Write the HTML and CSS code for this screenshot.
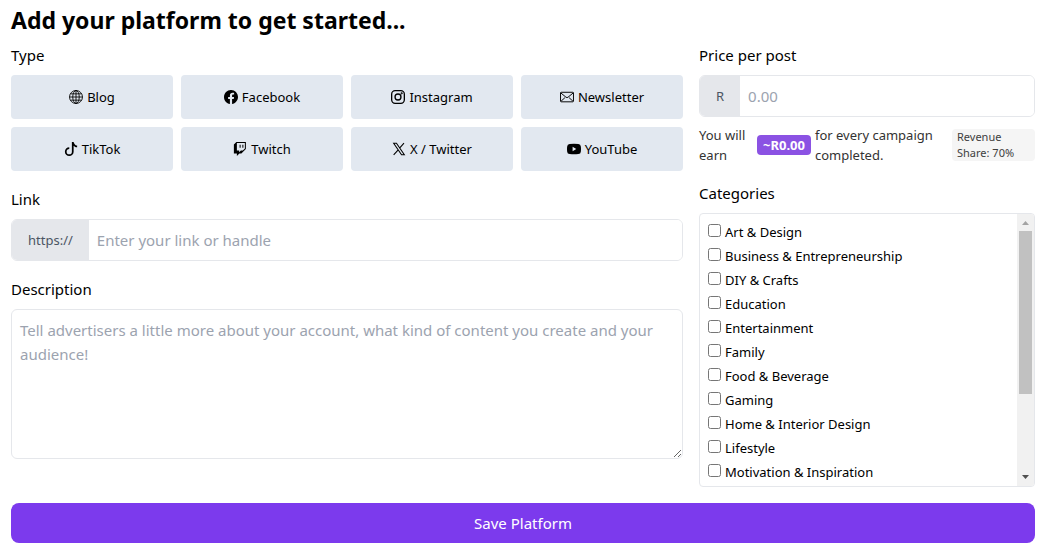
FILE: index.html
```html
<!DOCTYPE html>
<html lang="en">
<head>
	<meta charset="UTF-8">
	<meta name="viewport" content="width=device-width, initial-scale=1">
	<title>Add your platform</title>
	<link rel="stylesheet" href="styles.css">
</head>
<body>
	<form class="platform-form">
		<h1>Add your platform to get started...</h1>
		<div class="columns">
			<div class="column">
				<div class="field" role="group" aria-labelledby="type-label">
					<span class="field-label" id="type-label">Type</span>
					<div class="types">
						<button type="button" class="type-btn">
							<svg class="icon line" viewBox="0 0 16 16"><circle cx="8" cy="8" r="7.4"/><ellipse cx="8" cy="8" rx="3.7" ry="7.4"/><path d="M8 .6v14.8M.6 8h14.8M1.6 4.4h12.8M1.6 11.6h12.8"/></svg>
							Blog
						</button>
						<button type="button" class="type-btn">
							<svg class="icon" viewBox="0 0 16 16"><path d="M16 8.049c0-4.446-3.582-8.05-8-8.05C3.58 0-.002 3.603-.002 8.05c0 4.017 2.926 7.347 6.75 7.951v-5.625h-2.03V8.05H6.75V6.275c0-2.017 1.195-3.131 3.022-3.131.876 0 1.791.157 1.791.157v1.98h-1.009c-.993 0-1.303.621-1.303 1.258v1.51h2.218l-.354 2.326H9.25V16c3.824-.604 6.75-3.934 6.75-7.951"/></svg>
							Facebook
						</button>
						<button type="button" class="type-btn">
							<svg class="icon line" viewBox="0 0 16 16" stroke-width="1.5"><rect x=".75" y=".75" width="14.5" height="14.5" rx="4"/><circle cx="8" cy="8" r="3.4"/><circle cx="12.2" cy="3.8" r=".5"/></svg>
							Instagram
						</button>
						<button type="button" class="type-btn">
							<svg class="icon line" viewBox="0 0 16 16" stroke-width="1.1"><rect x=".6" y="2.6" width="14.8" height="10.9" rx=".8"/><path d="M1 3.4l5.9 4.9c.7.5 1.5.5 2.2 0L15 3.4M1.2 12.8l4.4-4M14.8 12.8l-4.4-4"/></svg>
							Newsletter
						</button>
						<button type="button" class="type-btn">
							<svg class="icon" viewBox="0 0 16 16"><path d="M9 0h1.98c.144.715.54 1.617 1.235 2.512C12.895 3.389 13.797 4 15 4v2c-1.753 0-3.07-.814-4-1.829V11a5 5 0 1 1-5-5v2a3 3 0 1 0 3 3z"/></svg>
							TikTok
						</button>
						<button type="button" class="type-btn">
							<svg class="icon" viewBox="0 0 16 16"><path d="M3.857 0 1 2.857v10.286h3.429V16l2.857-2.857H9.57L14.714 8V0zm9.714 7.429-2.285 2.285H9l-2 2v-2H4.429V1.143h9.142z"/><path d="M11.857 3.143h-1.143V6.57h1.143zm-3.143 0H7.571V6.57h1.143z"/></svg>
							Twitch
						</button>
						<button type="button" class="type-btn">
							<svg class="icon line" viewBox="0 0 16 16" stroke-width="1.2"><path d="M1.9 1.5h3.2l9 13h-3.2zM13.7 1.2 8.9 6.8M7.1 8.9l-5.2 5.9"/></svg>
							X / Twitter
						</button>
						<button type="button" class="type-btn">
							<svg class="icon" viewBox="0 0 16 16"><path fill-rule="evenodd" d="M3 2.2Q8 1.8 13 2.2 15.6 2.3 15.8 5 16.2 8 15.8 11 15.6 13.7 13 13.8 8 14.2 3 13.8.4 13.7.2 11-.2 8 .2 5 .4 2.3 3 2.2zM6.4 5.5v5L10.6 8z"/></svg>
							YouTube
						</button>
					</div>
				</div>
				<div class="field">
					<label class="field-label" for="link">Link</label>
					<div class="input-group">
						<span class="prefix">https://</span>
						<input type="text" id="link" placeholder="Enter your link or handle">
					</div>
				</div>
				<div class="field">
					<label class="field-label" for="description">Description</label>
					<textarea id="description" placeholder="Tell advertisers a little more about your account, what kind of content you create and your audience!"></textarea>
				</div>
			</div>
			<div class="column">
				<div class="field">
					<label class="field-label" for="price">Price per post</label>
					<div class="input-group">
						<span class="prefix">R</span>
						<input type="text" id="price" inputmode="decimal" placeholder="0.00">
					</div>
					<div class="earnings">
						<span class="earn-start">You will earn</span>
						<strong class="amount">~R0.00</strong>
						<span class="earn-end">for every campaign completed.</span>
						<span class="share">Revenue Share: 70%</span>
					</div>
				</div>
				<div class="field" role="group" aria-labelledby="categories-label">
					<span class="field-label" id="categories-label">Categories</span>
					<div class="categories">
						<div class="category-list">
							<label><input type="checkbox">Art &amp; Design</label>
							<label><input type="checkbox">Business &amp; Entrepreneurship</label>
							<label><input type="checkbox">DIY &amp; Crafts</label>
							<label><input type="checkbox">Education</label>
							<label><input type="checkbox">Entertainment</label>
							<label><input type="checkbox">Family</label>
							<label><input type="checkbox">Food &amp; Beverage</label>
							<label><input type="checkbox">Gaming</label>
							<label><input type="checkbox">Home &amp; Interior Design</label>
							<label><input type="checkbox">Lifestyle</label>
							<label><input type="checkbox">Motivation &amp; Inspiration</label>
						</div>
						<div class="scrollbar" aria-hidden="true">
							<svg class="arrow up" viewBox="0 0 17 17"><path d="M5 11l3.500-4 3.500 4z"/></svg>
							<div class="track"><div class="thumb"></div></div>
							<svg class="arrow down" viewBox="0 0 17 17"><path d="M5 6h7l-3.500 4z"/></svg>
						</div>
					</div>
				</div>
			</div>
		</div>
		<button type="submit" class="save-btn">Save Platform</button>
	</form>
</body>
</html>
```
FILE: styles.css
```css
* {
	box-sizing: border-box;
}

body {
	margin: 0;
	background: white;
	color: black;
	font-family: "Segoe UI", "Noto Sans", sans-serif;
	font-size: 15px;
	line-height: 24px;
}

button, input, textarea {
	font: inherit;
	color: inherit;
}

button {
	border: none;
	cursor: pointer;
}

.platform-form {
	padding: 4px 13px 12px 11px;
}

h1 {
	margin: 0 0 7px;
	font-size: 23px;
	font-weight: 700;
	line-height: 32px;
}

.columns {
	display: grid;
	grid-template-columns: 2fr 1fr;
	gap: 16px;
	margin-bottom: 16px;
}

.column {
	display: flex;
	flex-direction: column;
	gap: 16px;
	min-width: 0;
}

.field-label {
	display: block;
	margin-bottom: 8px;
}

/* platform types */
.types {
	display: grid;
	grid-template-columns: repeat(4, 1fr);
	gap: 8px;
}

.type-btn {
	display: flex;
	align-items: center;
	justify-content: center;
	gap: 4px;
	height: 44px;
	padding: 0;
	border-radius: 4px;
	background: #e2e8f0;
	font-size: 13px;
}

.icon {
	width: 14px;
	height: 14px;
	fill: currentColor;
}

.icon.line {
	fill: none;
	stroke: currentColor;
}

/* text fields */
.input-group {
	display: flex;
	height: 42px;
	border: 1px solid #e5e7eb;
	border-radius: 6px;
	overflow: hidden;
}

.prefix {
	display: flex;
	align-items: center;
	padding: 0 16px;
	background: #e5e7eb;
	color: #4b5563;
	font-size: 13px;
}

.input-group input {
	flex: 1;
	min-width: 0;
	padding: 0 8px;
	border: none;
	outline: none;
}

textarea {
	display: block;
	width: 100%;
	height: 150px;
	padding: 8px;
	border: 1px solid #e5e7eb;
	border-radius: 6px;
}

::placeholder {
	color: #9ca3af;
}

/* earnings line */
.earnings {
	display: flex;
	align-items: center;
	gap: 4px;
	margin-top: 8px;
	color: #333;
	font-size: 13px;
	line-height: 20px;
}

.earn-start {
	flex: 0 1 54px;
}

.amount {
	padding: 0 6px;
	border-radius: 4px;
	background: #8b52e3;
	color: white;
}

.earn-end {
	flex: 1;
}

.share {
	flex: 0 0 83px;
	padding: 0 5px;
	border-radius: 4px;
	background: #f5f5f5;
	color: #404040;
	font-size: 11px;
	line-height: 16px;
}

/* categories */
.categories {
	display: flex;
	border: 1px solid #e5e7eb;
	border-radius: 4px;
	overflow: hidden;
	font-size: 13px;
}

.category-list {
	flex: 1;
	padding: 6px 8px 2px;
}

.category-list label {
	display: block;
}

.category-list input {
	width: 13px;
	height: 13px;
	margin: 0 4px 0 0;
}

.scrollbar {
	display: flex;
	flex-direction: column;
	width: 17px;
	background: #f1f1f1;
}

.arrow {
	width: 17px;
	height: 17px;
}

.arrow.up {
	fill: #a3a3a3;
}

.arrow.down {
	fill: #505050;
}

.track {
	flex: 1;
	padding: 0 2px;
}

.thumb {
	height: 163px;
	background: #c1c1c1;
}

.save-btn {
	display: block;
	width: 100%;
	height: 40px;
	border-radius: 8px;
	background: #7c3aed;
	color: white;
}
```
